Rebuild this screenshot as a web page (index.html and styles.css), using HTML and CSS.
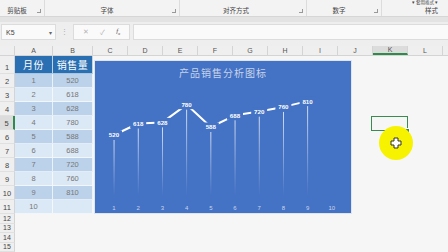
FILE: index.html
```html
<!DOCTYPE html>
<html>
<head>
<meta charset="utf-8">
<link rel="stylesheet" href="styles.css">
</head>
<body>
<div class="app">
  <div class="ribbon">
    <div class="grp g1"><span class="glabel">剪贴板</span><span class="launch"></span></div>
    <div class="grp g2"><span class="glabel">字体</span><span class="launch"></span></div>
    <div class="grp g3"><span class="glabel">对齐方式</span><span class="launch"></span></div>
    <div class="grp g4"><span class="glabel">数字</span><span class="launch"></span></div>
    <div class="grp g5"><span class="gtop">▾ 套用格式 ▾</span><span class="glabel">样式</span></div>
  </div>
  <div class="band"></div>
  <div class="fbar">
    <div class="namebox"><span>K5</span><span class="arrow">▾</span></div>
    <div class="dots">⋮</div>
    <div class="fbtns"><span>✕</span><span>✓</span><span class="fx">f<sub>x</sub></span></div>
    <div class="finput"></div>
  </div>
  <div class="gap"></div>
  <div class="sheet">
    <div class="colhead">
      <div class="corner"></div>
      <div class="ch wa">A</div><div class="ch wb">B</div>
      <div class="ch">C</div><div class="ch">D</div><div class="ch">E</div><div class="ch">F</div>
      <div class="ch">G</div><div class="ch">H</div><div class="ch">I</div><div class="ch">J</div>
      <div class="ch sel">K</div><div class="ch">L</div><div class="ch rest"></div>
    </div>
    <div class="row r1"><div class="rh">1</div><div class="c ca th">月份</div><div class="c cb th">销售量</div></div>
    <div class="row rn"><div class="rh">2</div><div class="c ca dk">1</div><div class="c cb dk">520</div></div>
    <div class="row rn"><div class="rh">3</div><div class="c ca lt">2</div><div class="c cb lt">618</div></div>
    <div class="row rn"><div class="rh">4</div><div class="c ca dk">3</div><div class="c cb dk">628</div></div>
    <div class="row rn"><div class="rh rsel">5</div><div class="c ca lt">4</div><div class="c cb lt">780</div></div>
    <div class="row rn"><div class="rh">6</div><div class="c ca dk">5</div><div class="c cb dk">588</div></div>
    <div class="row rn"><div class="rh">7</div><div class="c ca lt">6</div><div class="c cb lt">688</div></div>
    <div class="row rn"><div class="rh">8</div><div class="c ca dk">7</div><div class="c cb dk">720</div></div>
    <div class="row rn"><div class="rh">9</div><div class="c ca lt">8</div><div class="c cb lt">760</div></div>
    <div class="row rn"><div class="rh">10</div><div class="c ca dk">9</div><div class="c cb dk">810</div></div>
    <div class="row rn"><div class="rh">11</div><div class="c ca lt">10</div><div class="c cb lt"></div></div>
    <div class="row rs"><div class="rh">12</div></div>
    <div class="row rs"><div class="rh">13</div></div>
    <div class="row rs"><div class="rh">14</div></div>
    <div class="row rs"><div class="rh">15</div></div>

    <svg class="chart" width="258" height="154" viewBox="0 0 258 154">
      <defs>
        <linearGradient id="fade" x1="0" y1="0" x2="0" y2="1">
          <stop offset="0" stop-color="#ffffff" stop-opacity="0.85"/>
          <stop offset="1" stop-color="#ffffff" stop-opacity="0"/>
        </linearGradient>
      </defs>
      <rect x="0.5" y="0.5" width="257" height="153" fill="#4472c4" stroke="#dfe5ef" stroke-width="1"/>
      <text class="ttl" x="129" y="17" text-anchor="middle">产品销售分析图标</text>
      <g fill="url(#fade)">
        <rect x="19.6" y="80" width="0.9" height="56"/>
        <rect x="43.8" y="68.5" width="0.9" height="67.5"/>
        <rect x="68" y="67.4" width="0.9" height="68.6"/>
        <rect x="92.2" y="49.6" width="0.9" height="86.4"/>
        <rect x="116.4" y="72" width="0.9" height="64"/>
        <rect x="140.6" y="60.3" width="0.9" height="75.7"/>
        <rect x="164.8" y="56.6" width="0.9" height="79.4"/>
        <rect x="189" y="51.9" width="0.9" height="84.1"/>
        <rect x="213.2" y="46.1" width="0.9" height="89.9"/>
      </g>
      <polyline points="20,75 44.2,63.5 68.4,62.4 92.6,44.6 116.8,67 141,55.3 165.2,51.6 189.4,46.9 213.6,41.1" fill="none" stroke="#ffffff" stroke-width="2" stroke-linejoin="round"/>
      <g fill="#4472c4">
        <rect x="12" y="70.5" width="16" height="9"/>
        <rect x="36.2" y="59" width="16" height="9"/>
        <rect x="60.4" y="57.9" width="16" height="9"/>
        <rect x="84.6" y="40.1" width="16" height="9"/>
        <rect x="108.8" y="62.5" width="16" height="9"/>
        <rect x="133" y="50.8" width="16" height="9"/>
        <rect x="157.2" y="47.1" width="16" height="9"/>
        <rect x="181.4" y="42.4" width="16" height="9"/>
        <rect x="205.6" y="36.6" width="16" height="9"/>
      </g>
      <g class="dl" text-anchor="middle">
        <text x="20" y="77.4">520</text>
        <text x="44.2" y="65.9">618</text>
        <text x="68.4" y="64.8">628</text>
        <text x="92.6" y="47">780</text>
        <text x="116.8" y="69.4">588</text>
        <text x="141" y="57.7">688</text>
        <text x="165.2" y="54">720</text>
        <text x="189.4" y="49.3">760</text>
        <text x="213.6" y="43.5">810</text>
      </g>
      <g class="ax" text-anchor="middle">
        <text x="20" y="150">1</text>
        <text x="44.2" y="150">2</text>
        <text x="68.4" y="150">3</text>
        <text x="92.6" y="150">4</text>
        <text x="116.8" y="150">5</text>
        <text x="141" y="150">6</text>
        <text x="165.2" y="150">7</text>
        <text x="189.4" y="150">8</text>
        <text x="213.6" y="150">9</text>
        <text x="237.8" y="150">10</text>
      </g>
    </svg>

    <div class="selbox"><span class="handle"></span></div>

    <svg class="cursor" width="36" height="36" viewBox="0 0 36 36">
      <circle cx="18" cy="18" r="17" fill="#f7f200"/>
      <path d="M16 13 H20 V16 H23 V20 H20 V23 H16 V20 H13 V16 H16 Z" fill="#ffffff" stroke="#333333" stroke-width="1"/>
    </svg>
  </div>
</div>
</body>
</html>
```
FILE: styles.css
```css
html, body {
  margin: 0;
  padding: 0;
  width: 448px;
  height: 252px;
  overflow: hidden;
  background: #f6f6f6;
  font-family: "Liberation Sans", "Noto Sans CJK SC", sans-serif;
}

.app {
  width: 448px;
  height: 252px;
  display: flex;
  flex-direction: column;
  overflow: hidden;
}

/* ribbon */
.ribbon {
  height: 16px;
  flex: none;
  display: flex;
  background: #f3f3f3;
  border-bottom: 1px solid #d6d6d6;
}
.grp {
  position: relative;
  display: flex;
  flex-direction: column;
  justify-content: flex-end;
  align-items: center;
  border-right: 1px solid #dcdcdc;
  padding-bottom: 2px;
  box-sizing: border-box;
}
.g1 { width: 45px; padding-right: 10px; }
.g2 { width: 135px; padding-right: 10px; }
.g3 { width: 127px; padding-right: 14px; }
.g4 { width: 75px; padding-right: 10px; }
.g5 {
  flex: 1;
  border-right: none;
  align-items: flex-end;
  justify-content: space-between;
  padding: 0 10px 2px 0;
}
.glabel {
  font-family: "Noto Sans CJK SC", sans-serif;
  font-size: 6.5px;
  line-height: 8px;
  color: #444;
}
.gtop {
  font-family: "Noto Sans CJK SC", sans-serif;
  font-size: 4.5px;
  line-height: 5px;
  height: 5px;
  overflow: hidden;
  color: #444;
}
.launch {
  position: absolute;
  right: 3px;
  bottom: 3px;
  width: 3px;
  height: 3px;
  border-right: 1px solid #999;
  border-bottom: 1px solid #999;
}

.band {
  height: 5px;
  flex: none;
  background: #e3e3e3;
}

/* formula bar */
.fbar {
  height: 18px;
  flex: none;
  display: flex;
  align-items: stretch;
  background: #eeeeee;
  padding: 2px 0 0 0;
  box-sizing: border-box;
}
.namebox {
  width: 55px;
  margin-left: 1px;
  background: #fafafa;
  border: 1px solid #dcdcdc;
  display: flex;
  align-items: center;
  justify-content: space-between;
  padding: 0 3px 0 4px;
  box-sizing: border-box;
  font-size: 7px;
  color: #444;
}
.arrow { font-size: 6px; color: #666; }
.dots {
  width: 17px;
  display: flex;
  align-items: center;
  justify-content: center;
  font-size: 7px;
  color: #aaa;
}
.fbtns {
  width: 57px;
  background: #fafafa;
  border: 1px solid #dcdcdc;
  box-sizing: border-box;
  display: flex;
  align-items: center;
  justify-content: space-around;
  padding: 0 3px;
  font-size: 7px;
  color: #b5b5b5;
}
.fbtns .fx {
  font-family: "Liberation Serif", serif;
  font-style: italic;
  color: #555;
  font-size: 7px;
}
.fbtns .fx sub { font-size: 5px; }
.finput {
  flex: 1;
  margin-left: 3px;
  background: #fafafa;
  border: 1px solid #dcdcdc;
  border-right: none;
}
.gap {
  height: 6px;
  flex: none;
  background: #eeeeee;
}

/* sheet */
.sheet {
  position: relative;
  flex: 1;
  background: #f6f6f6;
}
.colhead {
  height: 10px;
  display: flex;
  background: #efefef;
  border-bottom: 1px solid #d4d4d4;
  box-sizing: border-box;
}
.corner {
  width: 15px;
  flex: none;
  border-right: 1px solid #d4d4d4;
  box-sizing: border-box;
  background: #efefef;
}
.ch {
  width: 35px;
  flex: none;
  border-right: 1px solid #d4d4d4;
  box-sizing: border-box;
  font-size: 7px;
  line-height: 9px;
  text-align: center;
  color: #555;
}
.ch.wa { width: 38px; }
.ch.wb { width: 40px; }
.ch.rest { flex: 1; border-right: none; }
.ch.sel {
  background: #dcdcdc;
  border-bottom: 2px solid #2f8a4c;
  line-height: 8px;
}

.row {
  display: flex;
}
.r1 { height: 18px; }
.rn { height: 14px; }
.rs { height: 9.5px; }
.rh {
  width: 15px;
  flex: none;
  background: #efefef;
  border-right: 1px solid #d4d4d4;
  border-bottom: 1px solid #e0e0e0;
  box-sizing: border-box;
  font-size: 7.5px;
  color: #444;
  display: flex;
  align-items: flex-end;
  justify-content: center;
  padding-bottom: 1px;
}
.rs .rh { font-size: 7px; line-height: 8px; padding-bottom: 0; }
.rh.rsel {
  background: #dcdcdc;
  border-right: 2px solid #2f8a4c;
}
.c {
  flex: none;
  box-sizing: border-box;
  display: flex;
  align-items: center;
  justify-content: center;
  font-size: 7.5px;
  color: #777;
  border-right: 1px solid rgba(255,255,255,0.7);
  border-bottom: 1px solid rgba(255,255,255,0.6);
}
.ca { width: 38px; }
.cb { width: 40px; }
.th {
  background: #2b6fb3;
  color: #ffffff;
  font-family: "Noto Sans CJK SC", sans-serif;
  font-size: 10px;
  letter-spacing: 0.5px;
}
.dk { background: #bcd2ea; }
.lt { background: #dbe8f5; }

/* chart overlay */
.chart {
  position: absolute;
  left: 94px;
  top: 14px;
}
.ttl {
  font-family: "Noto Sans CJK SC", sans-serif;
  font-size: 10px;
  letter-spacing: 1px;
  fill: #c6d2ea;
}
.dl {
  font-family: "Liberation Sans", sans-serif;
  font-size: 6.2px;
  font-weight: bold;
  fill: #ffffff;
}
.ax {
  font-family: "Liberation Sans", sans-serif;
  font-size: 6px;
  fill: #c9d5ee;
}

.selbox {
  position: absolute;
  left: 371px;
  top: 70px;
  width: 37px;
  height: 15px;
  border: 1.5px solid #3a8a52;
  box-sizing: border-box;
}
.handle {
  position: absolute;
  right: -2.5px;
  bottom: -2.5px;
  width: 3px;
  height: 3px;
  background: #3a8a52;
  border: 0.5px solid #fff;
}
.cursor {
  position: absolute;
  left: 378px;
  top: 79px;
}
```
